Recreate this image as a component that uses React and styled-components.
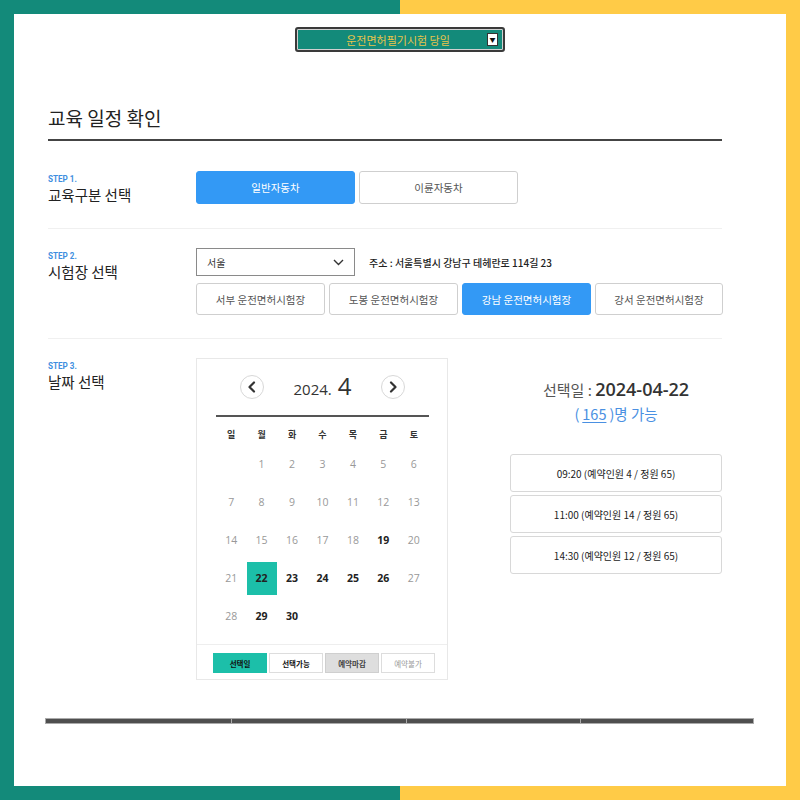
import React from 'react';
import styled, { createGlobalStyle } from 'styled-components';

const GlobalStyle = createGlobalStyle`
  html, body { margin: 0; padding: 0; }
  body { font-family: "Noto Sans CJK KR", "Noto Sans", sans-serif; color: #222; }
`;

const Frame = styled.div`
  width: 800px;
  height: 800px;
  box-sizing: border-box;
  padding: 14px;
  background: linear-gradient(to right, #138a7a 0, #138a7a 50%, #ffcb47 50%, #ffcb47 100%);
`;

const Panel = styled.div`
  width: 100%;
  height: 100%;
  background: #fff;
  display: flex;
  flex-direction: column;
`;

const TopSelect = styled.div`
  align-self: center;
  margin-top: 13px;
  width: 210px;
  height: 25px;
  box-sizing: border-box;
  border: 2px solid #3a3a3a;
  border-radius: 3px;
  box-shadow: inset 0 0 0 1px #d0d0d0;
  background: #138a7a;
  display: flex;
  align-items: center;
  padding: 0 5px 0 0;
`;

const TopSelectText = styled.span`
  flex: 1;
  text-align: center;
  color: #e9c44b;
  font-size: 11px;
  line-height: 14px;
  padding-left: 12px;
`;

const TopSelectArrow = styled.span`
  width: 11px;
  height: 13px;
  box-sizing: border-box;
  background: #fff;
  border: 1px solid #333;
  display: flex;
  align-items: center;
  justify-content: center;
  font-size: 6px;
  color: #111;
`;

const Content = styled.div`
  width: 674px;
  margin-left: 34px;
`;

const Title = styled.h2`
  margin: 52px 0 0;
  font-size: 19px;
  font-weight: 400;
  line-height: 28px;
  padding-bottom: 7px;
  border-bottom: 2px solid #444;
  color: #222;
`;

const StepRow = styled.div`
  display: grid;
  grid-template-columns: 148px 1fr;
  padding: ${p => p.$pad};
  border-bottom: ${p => (p.$last ? 'none' : '1px solid #f0f0f0')};
`;

const StepHead = styled.div`
  padding-top: 2px;
`;

const StepNo = styled.div`
  font-family: "Liberation Sans Narrow", "Roboto", sans-serif;
  font-size: 9px;
  font-weight: 700;
  line-height: 12px;
  color: #3f8fe0;
  transform: scaleX(0.9);
  transform-origin: left;
`;

const StepLabel = styled.div`
  font-size: 14.5px;
  line-height: 18px;
  margin-top: 1px;
  color: #222;
`;

const ButtonRow = styled.div`
  display: flex;
  gap: ${p => p.$gap || 4}px;
`;

const OptionButton = styled.div`
  width: ${p => p.$w}px;
  height: ${p => p.$h}px;
  box-sizing: border-box;
  border-radius: 3px;
  border: 1px solid ${p => (p.$active ? '#3399f5' : '#cfcfcf')};
  background: ${p => (p.$active ? '#3399f5' : '#fff')};
  color: ${p => (p.$active ? '#fff' : '#555')};
  font-size: 10.5px;
  display: flex;
  align-items: center;
  justify-content: center;
`;

const Stack = styled.div`
  display: flex;
  flex-direction: column;
  gap: 7px;
`;

const SelectLine = styled.div`
  display: flex;
  align-items: center;
  gap: 14px;
`;

const SelectBox = styled.div`
  width: 159px;
  height: 28px;
  box-sizing: border-box;
  border: 1px solid #8a8a8a;
  display: flex;
  align-items: center;
  justify-content: space-between;
  padding: 0 10px 0 10px;
  font-size: 10px;
  color: #333;
`;

const Address = styled.span`
  font-size: 10px;
  color: #222;
  font-weight: 500;
`;

const DateArea = styled.div`
  display: flex;
  align-items: flex-start;
`;

const Calendar = styled.div`
  width: 252px;
  box-sizing: border-box;
  border: 1px solid #e8e8e8;
`;

const CalHeader = styled.div`
  margin: 0 18px 0 19px;
  height: 58px;
  box-sizing: border-box;
  border-bottom: 2px solid #555;
  display: flex;
  align-items: center;
  justify-content: center;
  gap: 30px;
`;

const NavCircle = styled.div`
  width: 24px;
  height: 24px;
  box-sizing: border-box;
  border: 1px solid #d8d8d8;
  border-radius: 50%;
  display: flex;
  align-items: center;
  justify-content: center;
`;

const MonthText = styled.div`
  display: flex;
  align-items: baseline;
  gap: 6px;
  font-family: "Open Sans", "Noto Sans", sans-serif;
  color: #333;
  font-size: 15px;
  line-height: 24px;
`;

const MonthBig = styled.span`
  font-size: 24px;
`;

const Grid = styled.div`
  margin: 0 18px 0 19px;
  display: grid;
  grid-template-columns: repeat(7, 1fr);
`;

const WeekCell = styled.div`
  height: 18px;
  margin-top: 8px;
  margin-bottom: 2px;
  display: flex;
  align-items: center;
  justify-content: center;
  font-size: 9px;
  font-weight: 700;
  color: #333;
`;

const DayCell = styled.div`
  height: 38px;
  display: flex;
  align-items: center;
  justify-content: center;
`;

const DayNum = styled.span`
  width: 30px;
  height: 33px;
  display: flex;
  align-items: center;
  justify-content: center;
  font-family: "Open Sans", "Noto Sans", sans-serif;
  font-size: 10.5px;
  font-weight: ${p => (p.$on ? 700 : 400)};
  color: ${p => (p.$on ? '#222' : '#999')};
  background: ${p => (p.$sel ? '#1cbfa9' : 'transparent')};
`;

const Legend = styled.div`
  margin-top: 9px;
  border-top: 1px solid #eee;
  padding: 8px 0 6px;
  display: flex;
  justify-content: center;
  gap: 2px;
  padding-left: 4px;
`;

const LegendItem = styled.div`
  width: 54px;
  height: 20px;
  box-sizing: border-box;
  display: flex;
  align-items: center;
  justify-content: center;
  font-size: 7.5px;
  font-weight: ${p => (p.$muted ? 400 : 700)};
  color: ${p => p.$color};
  background: ${p => p.$bg};
  border: 1px solid ${p => p.$border};
`;

const Side = styled.div`
  margin-left: 62px;
  width: 212px;
  display: flex;
  flex-direction: column;
  align-items: center;
  padding-top: 18px;
`;

const SelectedDate = styled.div`
  font-size: 15px;
  color: #555;
  line-height: 26px;
`;

const DateValue = styled.span`
  font-family: "Open Sans", "Noto Sans", sans-serif;
  font-size: 18px;
  font-weight: 600;
  color: #333;
`;

const Capacity = styled.div`
  font-size: 14.5px;
  color: #4a90e2;
  line-height: 22px;
`;

const CapNum = styled.span`
  text-decoration: underline;
  text-underline-offset: 2px;
  text-decoration-thickness: 1px;
  margin: 0 3px;
`;

const Slots = styled.div`
  margin-top: 29px;
  width: 100%;
  display: flex;
  flex-direction: column;
  gap: 3px;
`;

const Slot = styled.div`
  height: 38px;
  box-sizing: border-box;
  border: 1px solid #d8d8d8;
  border-radius: 3px;
  display: flex;
  align-items: center;
  justify-content: center;
  font-size: 10px;
  color: #222;
`;

const BottomBar = styled.div`
  margin: 38px 0 0 31px;
  width: 709px;
  display: flex;
`;

const BarSeg = styled.div`
  width: ${p => p.$w}px;
  height: 6px;
  box-sizing: border-box;
  background: #4f4f4f;
  border: 1px solid #aaa;
  border-left-width: ${p => (p.$first ? 1 : 0)}px;
`;

const Chevron = ({ dir }) => (
  <svg width="10" height="12" viewBox="0 0 10 12">
    <polyline
      points={dir === 'left' ? '7,1.5 2.5,6 7,10.5' : '3,1.5 7.5,6 3,10.5'}
      fill="none"
      stroke="#333"
      strokeWidth="2.2"
      strokeLinecap="round"
      strokeLinejoin="round"
    />
  </svg>
);

const active = [19, 22, 23, 24, 25, 26, 29, 30];
const weekdays = ['일', '월', '화', '수', '목', '금', '토'];
const cells = [null, ...Array.from({ length: 30 }, (_, i) => i + 1)];

export default function App() {
  return (
    <>
      <GlobalStyle />
      <Frame>
        <Panel>
          <TopSelect>
            <TopSelectText>운전면허필기시험 당일</TopSelectText>
            <TopSelectArrow>▼</TopSelectArrow>
          </TopSelect>
          <Content>
            <Title>교육 일정 확인</Title>

            <StepRow $pad="30px 0 24px">
              <StepHead>
                <StepNo>STEP 1.</StepNo>
                <StepLabel>교육구분 선택</StepLabel>
              </StepHead>
              <ButtonRow>
                <OptionButton $w={159} $h={33} $active>일반자동차</OptionButton>
                <OptionButton $w={159} $h={33}>이륜자동차</OptionButton>
              </ButtonRow>
            </StepRow>

            <StepRow $pad="19px 0 23px">
              <StepHead>
                <StepNo>STEP 2.</StepNo>
                <StepLabel>시험장 선택</StepLabel>
              </StepHead>
              <Stack>
                <SelectLine>
                  <SelectBox>
                    <span>서울</span>
                    <svg width="11" height="7" viewBox="0 0 11 7">
                      <polyline points="1,1 5.5,5.5 10,1" fill="none" stroke="#333" strokeWidth="1.4" />
                    </svg>
                  </SelectBox>
                  <Address>주소 : 서울특별시 강남구 테헤란로 114길 23</Address>
                </SelectLine>
                <ButtonRow>
                  <OptionButton $w={129} $h={32}>서부 운전면허시험장</OptionButton>
                  <OptionButton $w={129} $h={32}>도봉 운전면허시험장</OptionButton>
                  <OptionButton $w={129} $h={32} $active>강남 운전면허시험장</OptionButton>
                  <OptionButton $w={128} $h={32}>강서 운전면허시험장</OptionButton>
                </ButtonRow>
              </Stack>
            </StepRow>

            <StepRow $pad="19px 0 0" $last>
              <StepHead>
                <StepNo>STEP 3.</StepNo>
                <StepLabel>날짜 선택</StepLabel>
              </StepHead>
              <DateArea>
                <Calendar>
                  <CalHeader>
                    <NavCircle><Chevron dir="left" /></NavCircle>
                    <MonthText>2024.<MonthBig>4</MonthBig></MonthText>
                    <NavCircle><Chevron dir="right" /></NavCircle>
                  </CalHeader>
                  <Grid>
                    {weekdays.map(w => <WeekCell key={w}>{w}</WeekCell>)}
                    {cells.map((d, i) => (
                      <DayCell key={i}>
                        {d && (
                          <DayNum $on={active.includes(d)} $sel={d === 22}>{d}</DayNum>
                        )}
                      </DayCell>
                    ))}
                  </Grid>
                  <Legend>
                    <LegendItem $bg="#1cbfa9" $border="#1cbfa9" $color="#111">선택일</LegendItem>
                    <LegendItem $bg="#fff" $border="#ddd" $color="#111">선택가능</LegendItem>
                    <LegendItem $bg="#dedede" $border="#cfcfcf" $color="#444">예약마감</LegendItem>
                    <LegendItem $bg="#fff" $border="#ddd" $color="#999" $muted>예약불가</LegendItem>
                  </Legend>
                </Calendar>
                <Side>
                  <SelectedDate>선택일 : <DateValue>2024-04-22</DateValue></SelectedDate>
                  <Capacity>(<CapNum>165</CapNum>)명 가능</Capacity>
                  <Slots>
                    <Slot>09:20 (예약인원 4 / 정원 65)</Slot>
                    <Slot>11:00 (예약인원 14 / 정원 65)</Slot>
                    <Slot>14:30 (예약인원 12 / 정원 65)</Slot>
                  </Slots>
                </Side>
              </DateArea>
            </StepRow>
          </Content>
          <BottomBar>
            <BarSeg $w={187} $first />
            <BarSeg $w={175} />
            <BarSeg $w={174} />
            <BarSeg $w={173} />
          </BottomBar>
        </Panel>
      </Frame>
    </>
  );
}
